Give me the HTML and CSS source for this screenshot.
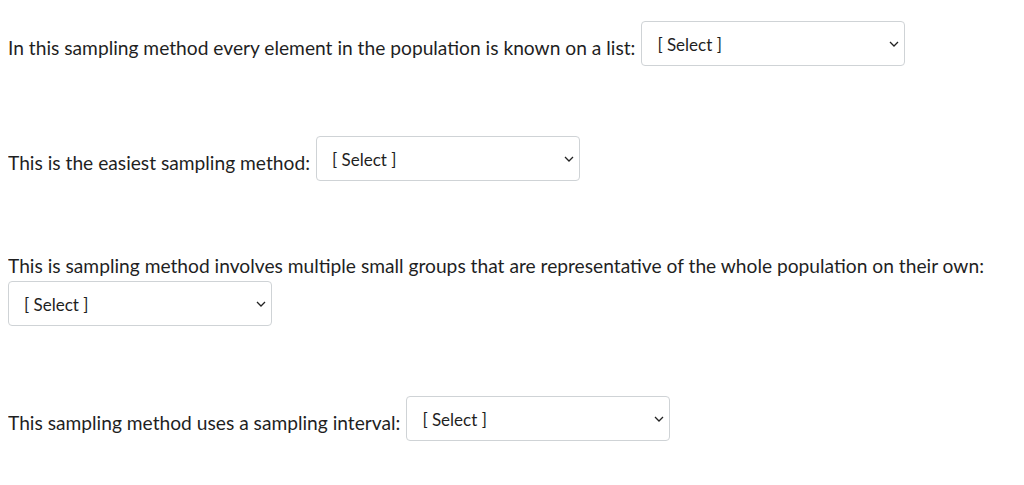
FILE: index.html
```html
<!DOCTYPE html>
<html lang="en">
<head>
<meta charset="utf-8">
<title>Sampling methods</title>
<link rel="stylesheet" href="styles.css">
</head>
<body>
<main class="quiz">
  <div class="q">
    <span class="label">In this sampling method every element in the population is known on a list:</span>
    <div class="select"><span class="value">[ Select ]</span><svg class="chev" viewBox="0 0 10 6" width="10" height="6"><path d="M1 1 L5 5 L9 1" fill="none" stroke="#222" stroke-width="1.3"/></svg></div>
  </div>
  <div class="q">
    <span class="label">This is the easiest sampling method:</span>
    <div class="select"><span class="value">[ Select ]</span><svg class="chev" viewBox="0 0 10 6" width="10" height="6"><path d="M1 1 L5 5 L9 1" fill="none" stroke="#222" stroke-width="1.3"/></svg></div>
  </div>
  <div class="q stacked">
    <span class="label">This is sampling method involves multiple small groups that are representative of the whole population on their own:</span>
    <div class="select"><span class="value">[ Select ]</span><svg class="chev" viewBox="0 0 10 6" width="10" height="6"><path d="M1 1 L5 5 L9 1" fill="none" stroke="#222" stroke-width="1.3"/></svg></div>
  </div>
  <div class="q">
    <span class="label">This sampling method uses a sampling interval:</span>
    <div class="select"><span class="value">[ Select ]</span><svg class="chev" viewBox="0 0 10 6" width="10" height="6"><path d="M1 1 L5 5 L9 1" fill="none" stroke="#222" stroke-width="1.3"/></svg></div>
  </div>
</main>
</body>
</html>
```

FILE: styles.css
```css
html, body {
  background: #ffffff;
}
body {
  margin: 8px;
  font-family: Lato, "Open Sans", sans-serif;
  color: #1f1f1f;
}
.quiz {
  padding-top: 13px;
  display: flex;
  flex-direction: column;
  gap: 70px;
}
.q {
  display: flex;
  flex-wrap: wrap;
  align-items: flex-start;
  column-gap: 6px;
}
.label {
  font-size: 19.2px;
  line-height: 30px;
  padding-top: 12px;
}
.q.stacked {
  flex-direction: column;
}
.q.stacked .label {
  padding-top: 0;
}
.select {
  box-sizing: border-box;
  width: 264px;
  height: 45px;
  border: 1px solid #cfd3d6;
  border-radius: 4px;
  background: #fff;
  display: flex;
  justify-content: space-between;
  align-items: flex-start;
  padding: 0 5px 0 15px;
}
.value {
  font-size: 17px;
  line-height: 20px;
  padding-top: 13px;
}
.chev {
  margin-top: 19px;
}
```
